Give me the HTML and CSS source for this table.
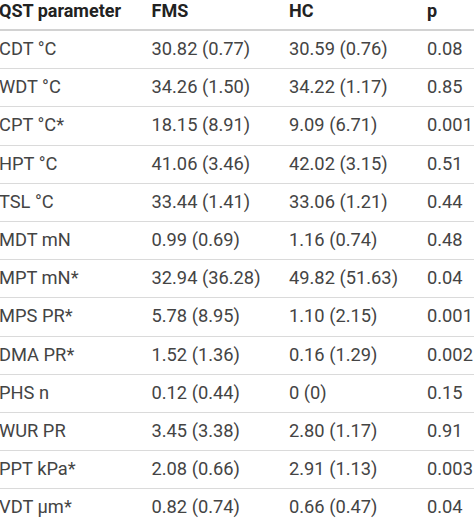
FILE: index.html
```html
<!DOCTYPE html>
<html>
<head>
<meta charset="utf-8">
<link rel="stylesheet" href="styles.css">
</head>
<body>
<div class="table">
  <div class="row head">
    <div>QST parameter</div><div>FMS</div><div>HC</div><div>p</div>
  </div>
  <div class="row"><div>CDT °C</div><div>30.82 (0.77)</div><div>30.59 (0.76)</div><div>0.08</div></div>
  <div class="row"><div>WDT °C</div><div>34.26 (1.50)</div><div>34.22 (1.17)</div><div>0.85</div></div>
  <div class="row"><div>CPT °C*</div><div>18.15 (8.91)</div><div>9.09 (6.71)</div><div>0.001</div></div>
  <div class="row"><div>HPT °C</div><div>41.06 (3.46)</div><div>42.02 (3.15)</div><div>0.51</div></div>
  <div class="row"><div>TSL °C</div><div>33.44 (1.41)</div><div>33.06 (1.21)</div><div>0.44</div></div>
  <div class="row"><div>MDT mN</div><div>0.99 (0.69)</div><div>1.16 (0.74)</div><div>0.48</div></div>
  <div class="row"><div>MPT mN*</div><div>32.94 (36.28)</div><div>49.82 (51.63)</div><div>0.04</div></div>
  <div class="row"><div>MPS PR*</div><div>5.78 (8.95)</div><div>1.10 (2.15)</div><div>0.001</div></div>
  <div class="row"><div>DMA PR*</div><div>1.52 (1.36)</div><div>0.16 (1.29)</div><div>0.002</div></div>
  <div class="row"><div>PHS n</div><div>0.12 (0.44)</div><div>0 (0)</div><div>0.15</div></div>
  <div class="row"><div>WUR PR</div><div>3.45 (3.38)</div><div>2.80 (1.17)</div><div>0.91</div></div>
  <div class="row"><div>PPT kPa*</div><div>2.08 (0.66)</div><div>2.91 (1.13)</div><div>0.003</div></div>
  <div class="row"><div>VDT µm*</div><div>0.82 (0.74)</div><div>0.66 (0.47)</div><div>0.04</div></div>
</div>
</body>
</html>
```
FILE: styles.css
```css
html, body {
  margin: 0;
  padding: 0;
  background: #fff;
  overflow: hidden;
}
.table {
  width: 520px;
  margin-left: -1px;
  font-family: Roboto, "Liberation Sans", sans-serif;
  font-size: 18.3px;
  color: #444;
}
.row {
  display: grid;
  grid-template-columns: 152.5px 137.5px 138px 92px;
  align-items: center;
  box-sizing: border-box;
  height: 38.2px;
  padding-bottom: 2px;
  border-bottom: 1px solid #dadada;
  white-space: nowrap;
}
.head {
  height: 31px;
  padding-bottom: 0;
  border-bottom: 2px solid #d2d2d2;
  font-weight: 700;
  font-size: 18px;
  color: #222;
  align-items: start;
  line-height: 21px;
}
```
